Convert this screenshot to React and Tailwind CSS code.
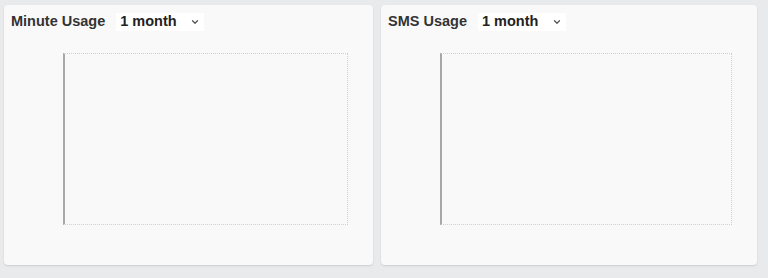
import { ChevronDown } from 'lucide-react'

function UsageCard({ title, width }) {
  return (
    <div className={`${width} h-[260px] bg-[#f9f9f9] rounded-[4px] shadow-[0_1px_2px_rgba(0,0,0,0.12)] flex flex-col`}>
      <div className="flex items-center gap-[11px] pl-[7px] pt-[3px] h-[30px]">
        <span className="text-[14.5px] font-bold text-[#333]">{title}</span>
        <div className="w-[88px] h-[18px] bg-white flex items-center justify-between pl-[4px] pr-[4px]">
          <span className="text-[14.5px] font-bold text-[#222]">1 month</span>
          <ChevronDown size={10} strokeWidth={3} className="text-[#555]" />
        </div>
      </div>
      <div className="flex-1 pl-[59px] pr-[25px] pt-[18px] pb-[40px]">
        <div className="h-full border-t border-r border-b border-dotted border-[#d0d0d0] border-l-2 border-l-[#a8a8a8] [border-left-style:solid]" />
      </div>
    </div>
  )
}

export default function App() {
  return (
    <div className="w-[768px] h-[278px] bg-[#e9eaec] pl-[4px] pt-[5px] flex gap-[8px] font-['Liberation_Sans',Arial,sans-serif]">
      <UsageCard title="Minute Usage" width="w-[369px]" />
      <UsageCard title="SMS Usage" width="w-[376px]" />
    </div>
  )
}
